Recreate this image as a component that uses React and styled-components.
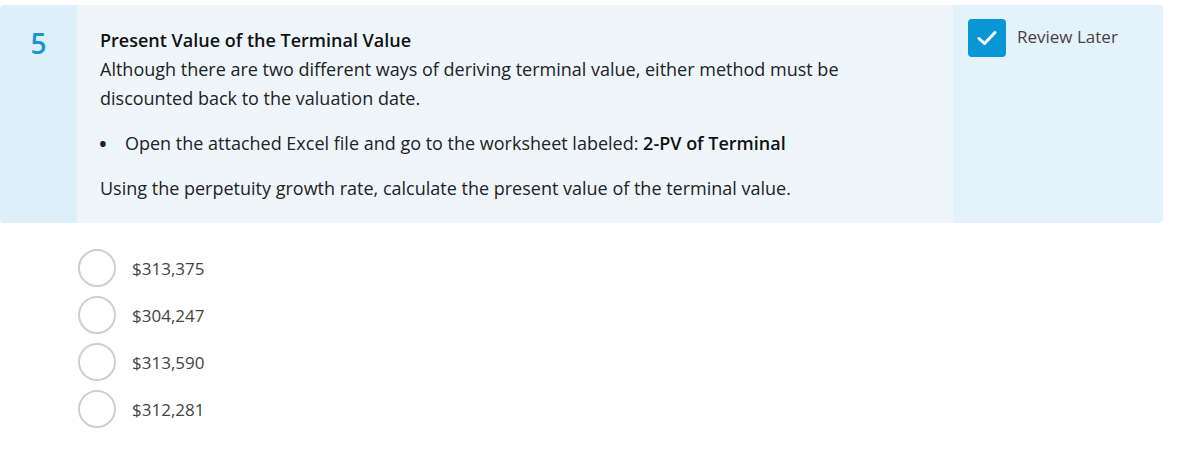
import React from 'react'
import styled, { createGlobalStyle } from 'styled-components'

const GlobalStyle = createGlobalStyle`
  body {
    margin: 0;
    background: #ffffff;
    font-family: "Open Sans", "Liberation Sans", sans-serif;
    color: #222;
  }
`

const Page = styled.div`
  padding-top: 5px;
`

const Card = styled.div`
  width: 1163px;
  display: flex;
  border-radius: 4px;
  overflow: hidden;
`

const NumberCol = styled.div`
  width: 77px;
  flex-shrink: 0;
  background: #ddeff9;
  display: flex;
  justify-content: center;
  padding-top: 19px;
  box-sizing: border-box;
  font-size: 28px;
  font-weight: 600;
  color: #1a95d4;
  line-height: 38px;
`

const Body = styled.div`
  flex: 1;
  background: #eef6fc;
  padding: 21px 23px 20px 23px;
  font-size: 18px;
  line-height: 29px;
  color: #222;
`

const Title = styled.div`
  font-weight: 600;
  color: #111;
`

const Para = styled.p`
  margin: 0;
  max-width: 760px;
`

const List = styled.ul`
  margin: 16px 0;
  padding: 0;
  list-style: none;
`

const Item = styled.li`
  display: flex;
  b {
    font-weight: 600;
    color: #111;
  }
`

const Dot = styled.span`
  width: 25px;
  flex-shrink: 0;
  font-size: 26px;
  line-height: 29px;
  margin-left: -2px;
  margin-right: 2px;
`

const Side = styled.div`
  width: 210px;
  flex-shrink: 0;
  background: #e4f3fb;
  padding: 14px 15px;
  box-sizing: border-box;
  display: flex;
  align-items: flex-start;
  gap: 11px;
`

const CheckBox = styled.div`
  width: 38px;
  height: 38px;
  border-radius: 4px;
  background: #0996d5;
  display: flex;
  align-items: center;
  justify-content: center;
  flex-shrink: 0;
`

const ReviewLabel = styled.span`
  font-size: 17px;
  line-height: 38px;
  margin-top: -1px;
  color: #4a4040;
`

const Options = styled.div`
  padding: 26px 0 0 78px;
  display: flex;
  flex-direction: column;
  gap: 9px;
`

const Option = styled.label`
  display: flex;
  align-items: center;
  gap: 16px;
  font-size: 17px;
  color: #444;
  cursor: pointer;
`

const Radio = styled.span`
  width: 38px;
  height: 38px;
  border-radius: 50%;
  border: 2px solid #cfcfcf;
  box-sizing: border-box;
  background: #fff;
  flex-shrink: 0;
`

const answers = ['$313,375', '$304,247', '$313,590', '$312,281']

export default function App() {
  return (
    <Page>
      <GlobalStyle />
      <Card>
        <NumberCol>5</NumberCol>
        <Body>
          <Title>Present Value of the Terminal Value</Title>
          <Para>
            Although there are two different ways of deriving terminal value, either method must be
            discounted back to the valuation date.
          </Para>
          <List>
            <Item>
              <Dot>•</Dot>
              <span>
                Open the attached Excel file and go to the worksheet labeled: <b>2-PV of Terminal</b>
              </span>
            </Item>
          </List>
          <Para>Using the perpetuity growth rate, calculate the present value of the terminal value.</Para>
        </Body>
        <Side>
          <CheckBox>
            <svg width="20" height="16" viewBox="0 0 20 16">
              <path d="M2 8.5 L7.5 13.5 L18 2.5" fill="none" stroke="#fff" strokeWidth="3" strokeLinecap="round" strokeLinejoin="round" />
            </svg>
          </CheckBox>
          <ReviewLabel>Review Later</ReviewLabel>
        </Side>
      </Card>
      <Options>
        {answers.map(a => (
          <Option key={a}>
            <Radio />
            {a}
          </Option>
        ))}
      </Options>
    </Page>
  )
}
